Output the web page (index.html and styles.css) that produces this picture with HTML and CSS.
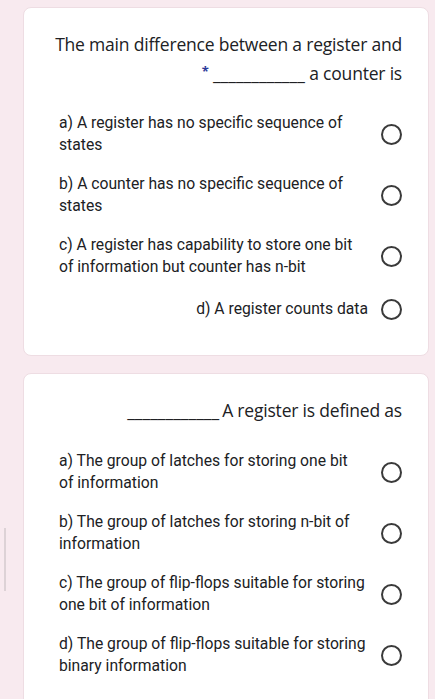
FILE: index.html
```html
<!DOCTYPE html>
<html>
<head>
<meta charset="utf-8">
<link rel="stylesheet" href="styles.css">
</head>
<body>
<div class="scroll-mark"></div>
<div class="page">
  <section class="card card-first">
    <h2 class="title">The main difference between a register and<br><span class="req">*</span> <span class="blank">____________</span> a counter is</h2>
    <div class="options">
      <label class="option"><span class="opt-text">a) A register has no specific sequence of states</span><span class="radio"></span></label>
      <label class="option"><span class="opt-text">b) A counter has no specific sequence of states</span><span class="radio"></span></label>
      <label class="option"><span class="opt-text">c) A register has capability to store one bit of information but counter has n-bit</span><span class="radio"></span></label>
      <label class="option option-short"><span class="opt-text">d) A register counts data</span><span class="radio"></span></label>
    </div>
  </section>
  <section class="card card-second">
    <h2 class="title"><span class="blank blank-lead">____________</span>A register is defined as</h2>
    <div class="options options-second">
      <label class="option"><span class="opt-text">a) The group of latches for storing one bit<br>of information</span><span class="radio"></span></label>
      <label class="option"><span class="opt-text">b) The group of latches for storing n-bit of information</span><span class="radio"></span></label>
      <label class="option"><span class="opt-text">c) The group of flip-flops suitable for storing one bit of information</span><span class="radio"></span></label>
      <label class="option"><span class="opt-text">d) The group of flip-flops suitable for storing binary information</span><span class="radio"></span></label>
    </div>
  </section>
</div>
</body>
</html>
```

FILE: styles.css
```css
html, body {
  margin: 0;
  padding: 0;
  background: #f8eaef;
  height: 100%;
  overflow: hidden;
}
body {
  font-family: Roboto, "Liberation Sans", sans-serif;
  color: #202124;
  position: relative;
}
.scroll-mark {
  position: absolute;
  left: 4px;
  top: 528px;
  width: 2px;
  height: 63px;
  background: #ddd2d6;
}
.page {
  display: flex;
  flex-direction: column;
  gap: 17px;
  padding: 7px 6px 0 23px;
}
.card {
  background: #fff;
  border: 1px solid #eedde3;
  border-radius: 8px;
  padding: 0 26px 0 35px;
  box-sizing: border-box;
}
.card-first {
  height: 349px;
  padding-top: 23px;
}
.card-second {
  padding-top: 23px;
  height: 340px;
}
.title {
  margin: 0 0 0 -8px;
  font-family: "Open Sans", Roboto, sans-serif;
  font-weight: 400;
  font-size: 17.5px;
  line-height: 27px;
  text-align: right;
  letter-spacing: -0.2px;
  white-space: nowrap;
}
.req {
  color: #2b3a9a;
  font-size: 13px;
  font-weight: 700;
  vertical-align: 4px;
}
.blank {
  letter-spacing: 0;
}
.blank-lead {
  margin-right: 3px;
}
.options {
  display: flex;
  flex-direction: column;
  gap: 17px;
  margin-top: 25px;
}
.options-second {
  margin-top: 26px;
}
.option {
  display: flex;
  justify-content: flex-end;
  align-items: center;
  gap: 13px;
}
.option-short {
  margin-top: 3px;
}
.opt-text {
  flex: 1 1 auto;
  font-size: 15.7px;
  line-height: 22px;
  text-align: left;
}
.option-short .opt-text {
  flex: 0 1 auto;
}
.radio {
  flex: none;
  width: 17px;
  height: 17px;
  border: 2px solid #3a3a3a;
  border-radius: 50%;
}
```
